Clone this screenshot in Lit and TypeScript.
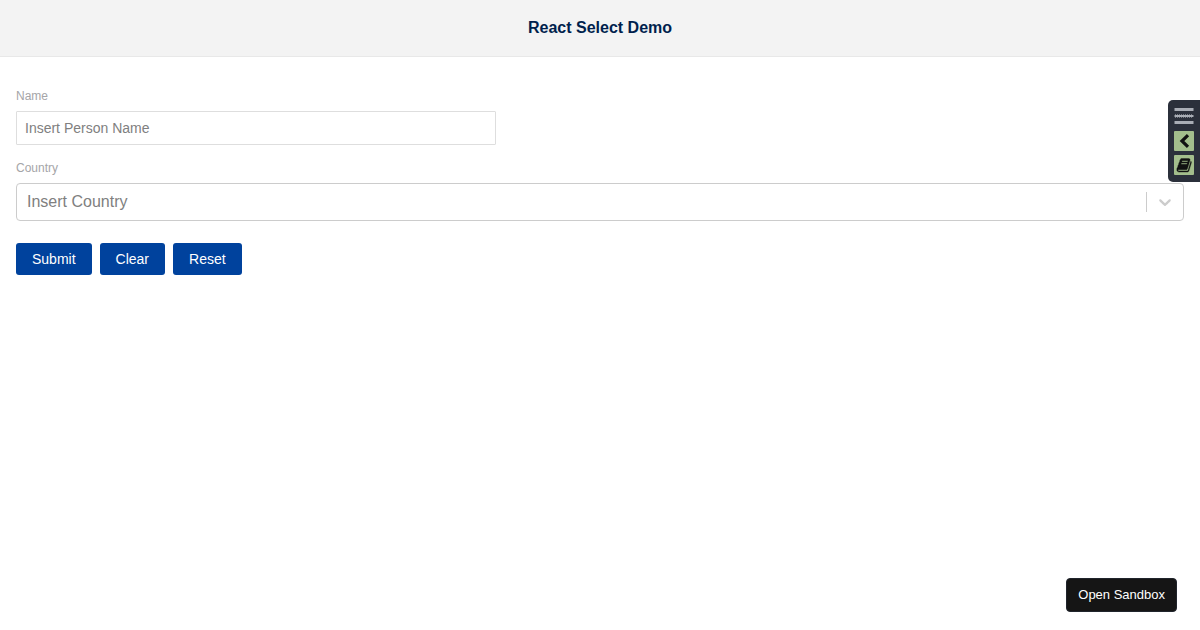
import { LitElement, html, css } from "lit";
import { customElement, state } from "lit/decorators.js";

const COUNTRIES = ["Indonesia", "Japan", "Malaysia", "Singapore"];

@customElement("tool-rail")
export class ToolRail extends LitElement {
  static styles = css`
    :host {
      display: block;
      background: #2b303b;
      border-radius: 5px 0 0 5px;
      padding: 7px 6px;
    }
    .tools {
      display: flex;
      flex-direction: column;
      gap: 4px;
    }
    .tool {
      display: block;
      width: 20px;
      height: 20px;
      padding: 0;
      border: 0;
      border-radius: 1px;
      background: #a3be8c;
      cursor: pointer;
    }
    .plain {
      background: none;
    }
    svg {
      display: block;
    }
  `;

  render() {
    return html`
      <div class="tools">
        <button class="tool plain" type="button" aria-label="Menu">
          <svg width="20" height="20" viewBox="0 0 20 20" aria-hidden="true">
            <path d="M0.5 2.6H19.5M0.5 15.4H19.5" stroke="#a9adb5" stroke-width="3" />
            <path d="M0.5 9H19.5" stroke="#a9adb5" stroke-width="2" />
            <path d="M1 9H19" stroke="#a9adb5" stroke-width="3.6" stroke-dasharray="1 1" stroke-opacity="0.8" />
          </svg>
        </button>
        <button class="tool" type="button" aria-label="Collapse">
          <svg width="20" height="20" viewBox="0 0 20 20" aria-hidden="true">
            <path d="M14 4.2L8 10L14 15.8" fill="none" stroke="#111" stroke-width="3.2" />
          </svg>
        </button>
        <button class="tool" type="button" aria-label="Docs">
          <svg width="20" height="20" viewBox="0 0 20 20" aria-hidden="true">
            <path transform="translate(2.8 2.4) scale(0.0088)" fill="#111" stroke="#111" stroke-width="40" d="M1639 478q40 57 18 129l-275 906q-19 64-76.5 107.5t-122.5 43.5h-923q-77 0-148.500-53.500t-99.500-131.500q-24-67-2-127 0-4 3-27t4-37q1-8-3-21.500t-3-19.500q2-11 8-21t16.500-23.500 16.500-23.500q23-38 45-91.500t30-91.500q3-10 .5-30t-.5-28q3-11 17-28t17-23q21-36 42-92t25-90q1-9-2.500-32t.5-28q4-13 22-30.500t22-22.500q19-26 42.500-84.500t27.500-96.500q1-8-3-25.500t-2-26.500q2-8 9-18t18-23 17-21q8-12 16.500-30.500t15-35 16-36 19.500-32 26.500-23.500 36-11.500 47.500 5.500l-1 3q38-9 51-9h761q74 0 114 56t18 130l-274 906q-36 119-71.500 153.500t-128.500 34.500h-869q-27 0-38 15-11 16-1 43 24 70 144 70h923q29 0 56-15.500t35-41.500l300-987q7-22 5-57 38 15 59 43zm-1064 2q-4 13 2 22.500t20 9.500h608q13 0 25.500-9.500t16.500-22.500l21-64q4-13-2-22.500t-20-9.500h-608q-13 0-25.500 9.500t-16.500 22.500zm-83 256q-4 13 2 22.500t20 9.500h608q13 0 25.500-9.500t16.500-22.500l21-64q4-13-2-22.500t-20-9.500h-608q-13 0-25.500 9.500t-16.500 22.500z" />
          </svg>
        </button>
      </div>
    `;
  }
}

@customElement("app-root")
export class AppRoot extends LitElement {
  static styles = css`
    :host {
      display: block;
      min-height: 100vh;
      background: #fff;
      font-family: Helvetica, "Liberation Sans", Arial, sans-serif;
      font-size: 14px;
    }
    * {
      box-sizing: border-box;
    }
    .header {
      padding: 16px;
      background: #f3f3f3;
      border-bottom: 1px solid #e8e8e8;
      text-align: center;
    }
    .title {
      margin: 0;
      font-size: 16px;
      line-height: 24px;
      font-weight: 700;
      color: #001f4d;
    }
    .form {
      display: flex;
      flex-direction: column;
      gap: 15px;
      padding: 31px 16px;
    }
    .field {
      display: flex;
      flex-direction: column;
      gap: 7px;
    }
    .label {
      font-size: 12px;
      line-height: 16px;
      color: #a5a5a8;
    }
    .text {
      width: 100%;
      max-width: 480px;
      height: 34px;
      padding: 0 8px;
      border: 1px solid #dedede;
      border-radius: 1px;
      background: #fff;
      font: inherit;
      color: #333;
    }
    .text::placeholder {
      color: #808080;
      opacity: 1;
    }
    .control {
      display: grid;
      grid-template-columns: 1fr auto;
      border: 1px solid #ccc;
      border-radius: 4px;
      background: #fff;
    }
    .select {
      grid-area: 1 / 1 / 2 / 3;
      width: 100%;
      height: 36px;
      padding: 0 48px 2px 10px;
      border: 0;
      border-radius: 4px;
      appearance: none;
      background: transparent;
      font: inherit;
      font-size: 16px;
      color: #333;
    }
    .empty {
      color: #808080;
    }
    .indicators {
      grid-area: 1 / 2;
      display: flex;
      align-items: center;
      gap: 8px;
      padding-right: 8px;
      pointer-events: none;
    }
    .separator {
      width: 1px;
      height: 20px;
      background: #ccc;
    }
    .chevron {
      display: block;
      fill: #ccc;
    }
    .actions {
      display: flex;
      gap: 8px;
      padding-top: 7px;
    }
    .button {
      height: 32px;
      padding: 0 16px;
      border: 0;
      border-radius: 3px;
      background: #00429d;
      color: #fff;
      font: inherit;
      cursor: pointer;
    }
    .rail {
      position: fixed;
      top: 100px;
      right: 0;
    }
    .sandbox {
      position: fixed;
      right: 23px;
      bottom: 18px;
      height: 34px;
      padding: 0 11px 2px;
      border: 1px solid #20242c;
      border-radius: 4px;
      background: #151515;
      color: #fff;
      font: inherit;
      font-size: 13px;
      cursor: pointer;
    }
  `;

  @state() private country = "";

  private pick(e: Event) {
    this.country = (e.target as HTMLSelectElement).value;
  }

  private clear() {
    this.country = "";
  }

  render() {
    return html`
      <header class="header"><h1 class="title">React Select Demo</h1></header>
      <form class="form" @submit=${(e: Event) => e.preventDefault()} @reset=${this.clear}>
        <div class="field">
          <label class="label" for="name">Name</label>
          <input class="text" id="name" type="text" placeholder="Insert Person Name" />
        </div>
        <div class="field">
          <label class="label" for="country">Country</label>
          <div class="control">
            <select class="select ${this.country ? "" : "empty"}" id="country" .value=${this.country} @change=${this.pick}>
              <option value="" selected>Insert Country</option>
              ${COUNTRIES.map((c) => html`<option value=${c}>${c}</option>`)}
            </select>
            <div class="indicators">
              <span class="separator"></span>
              <svg class="chevron" width="20" height="20" viewBox="0 0 20 20" aria-hidden="true">
                <path d="M4.516 7.548c0.436-0.446 1.043-0.481 1.576 0l3.908 3.747 3.908-3.747c0.533-0.481 1.141-0.446 1.574 0 0.436 0.445 0.408 1.197 0 1.615-0.406 0.418-4.695 4.502-4.695 4.502-0.217 0.223-0.502 0.335-0.787 0.335s-0.57-0.112-0.789-0.335c0 0-4.287-4.084-4.695-4.502s-0.436-1.17 0-1.615z" />
              </svg>
            </div>
          </div>
        </div>
        <div class="actions">
          <button class="button" type="submit">Submit</button>
          <button class="button" type="button" @click=${this.clear}>Clear</button>
          <button class="button" type="reset">Reset</button>
        </div>
      </form>
      <tool-rail class="rail"></tool-rail>
      <button class="sandbox" type="button">Open Sandbox</button>
    `;
  }
}
